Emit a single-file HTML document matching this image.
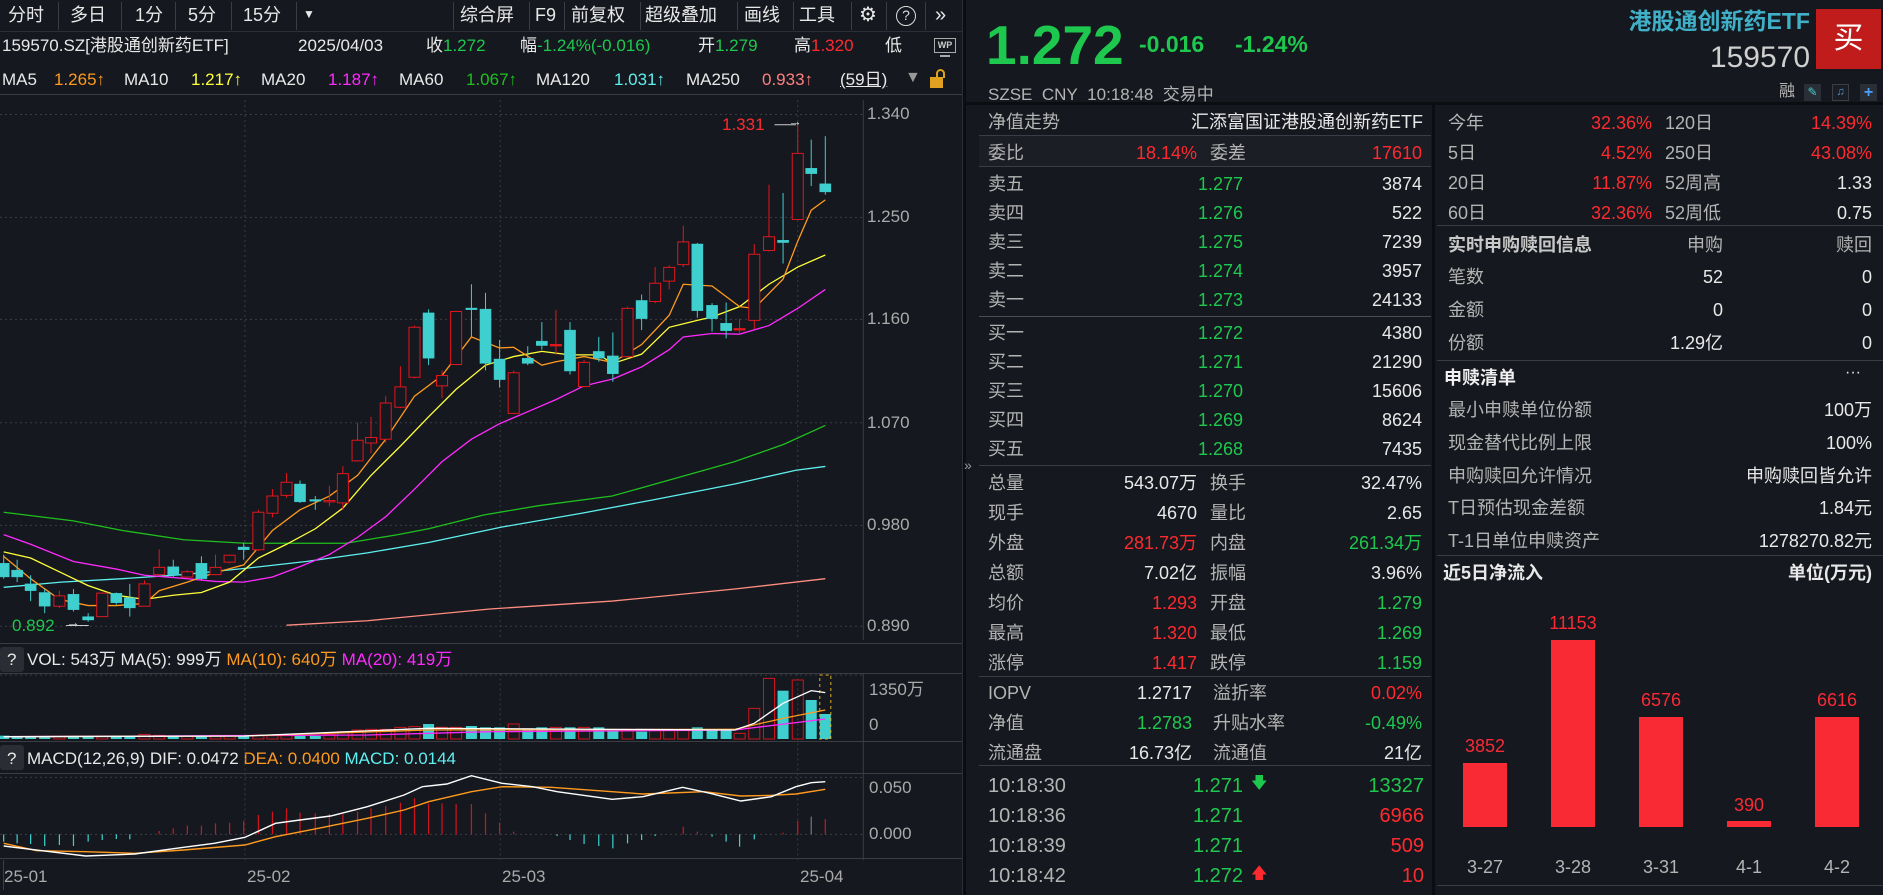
<!DOCTYPE html>
<html><head><meta charset="utf-8">
<style>
*{margin:0;padding:0;box-sizing:border-box}
body{width:1883px;height:895px;background:#15181e;position:relative;overflow:hidden;font-family:"Liberation Sans","Noto Sans CJK SC",sans-serif;color:#d8d8d8}
.t{position:absolute;white-space:nowrap;line-height:1}
.r{text-align:right}
.g{color:#1ec84f}.rd{color:#ff2a2f}.w{color:#e8e8e8}.l{color:#b4b4b4}
.hl{position:absolute;height:1px;background:#3a3d44}
.vl{position:absolute;width:1px;background:#3a3d44}
svg{position:absolute}
</style></head><body>

<!-- toolbar -->
<div class="hl" style="left:0;top:31px;width:962px;background:#2c2f36"></div>
<div class="vl" style="left:58px;top:2px;height:28px"></div>
<div class="vl" style="left:121px;top:2px;height:28px"></div>
<div class="vl" style="left:175px;top:2px;height:28px"></div>
<div class="vl" style="left:231px;top:2px;height:28px"></div>
<div class="vl" style="left:296px;top:2px;height:28px"></div>
<div class="vl" style="left:453px;top:2px;height:28px"></div>
<div class="vl" style="left:529px;top:2px;height:28px"></div>
<div class="vl" style="left:564px;top:2px;height:28px"></div>
<div class="vl" style="left:640px;top:2px;height:28px"></div>
<div class="vl" style="left:737px;top:2px;height:28px"></div>
<div class="vl" style="left:793px;top:2px;height:28px"></div>
<div class="vl" style="left:851px;top:2px;height:28px"></div>
<div class="vl" style="left:886px;top:2px;height:28px"></div>
<div class="vl" style="left:925px;top:2px;height:28px"></div>
<div class="t w" style="left:8px;top:6px;font-size:18px">分时</div>
<div class="t w" style="left:70px;top:6px;font-size:18px">多日</div>
<div class="t w" style="left:135px;top:6px;font-size:18px">1分</div>
<div class="t w" style="left:188px;top:6px;font-size:18px">5分</div>
<div class="t w" style="left:243px;top:6px;font-size:18px">15分</div>
<div class="t w" style="left:303px;top:8px;font-size:12px">▼</div>
<div class="t w" style="left:460px;top:6px;font-size:18px">综合屏</div>
<div class="t w" style="left:535px;top:6px;font-size:18px">F9</div>
<div class="t w" style="left:571px;top:6px;font-size:18px">前复权</div>
<div class="t w" style="left:645px;top:6px;font-size:18px">超级叠加</div>
<div class="t w" style="left:744px;top:6px;font-size:18px">画线</div>
<div class="t w" style="left:799px;top:6px;font-size:18px">工具</div>
<div class="t w" style="left:859px;top:5px;font-size:20px">⚙</div>
<div style="position:absolute;left:896px;top:6px;width:20px;height:20px;border:1.5px solid #ddd;border-radius:50%;color:#ddd;font-size:14px;text-align:center;line-height:17px">?</div>
<div class="t w" style="left:935px;top:5px;font-size:20px">»</div>

<!-- row2 -->
<div class="t w" style="left:2px;top:37px;font-size:17px">159570.SZ[港股通创新药ETF]</div>
<div class="t w" style="left:298px;top:37px;font-size:17px">2025/04/03</div>
<div class="t w" style="left:426px;top:37px;font-size:17px">收<span class="g">1.272</span></div>
<div class="t w" style="left:520px;top:37px;font-size:17px">幅<span class="g">-1.24%(-0.016)</span></div>
<div class="t w" style="left:698px;top:37px;font-size:17px">开<span class="g">1.279</span></div>
<div class="t w" style="left:794px;top:37px;font-size:17px">高<span class="rd">1.320</span></div>
<div class="t w" style="left:885px;top:37px;font-size:17px">低</div>
<div style="position:absolute;left:934px;top:38px;width:22px;height:15px;border:1.5px solid #aaa;color:#ccc;font-size:9px;font-weight:bold;text-align:center;line-height:12px">WP</div>
<div style="position:absolute;left:940px;top:55px;width:10px;height:2px;background:#aaa"></div>
<!-- row3 -->
<div class="t w" style="left:2px;top:71px;font-size:17px">MA5</div>
<div class="t" style="left:54px;top:71px;font-size:17px;color:#ff9a1e">1.265↑</div>
<div class="t w" style="left:124px;top:71px;font-size:17px">MA10</div>
<div class="t" style="left:191px;top:71px;font-size:17px;color:#ffff3a">1.217↑</div>
<div class="t w" style="left:261px;top:71px;font-size:17px">MA20</div>
<div class="t" style="left:328px;top:71px;font-size:17px;color:#ff2aff">1.187↑</div>
<div class="t w" style="left:399px;top:71px;font-size:17px">MA60</div>
<div class="t" style="left:466px;top:71px;font-size:17px;color:#1fbf1f">1.067↑</div>
<div class="t w" style="left:536px;top:71px;font-size:17px">MA120</div>
<div class="t" style="left:614px;top:71px;font-size:17px;color:#5ef0f0">1.031↑</div>
<div class="t w" style="left:686px;top:71px;font-size:17px">MA250</div>
<div class="t" style="left:762px;top:71px;font-size:17px;color:#ff8080">0.933↑</div>
<div class="t w" style="left:840px;top:71px;font-size:17px;text-decoration:underline">(59日)</div>
<div class="t" style="left:905px;top:70px;font-size:16px;color:#999">▼</div>
<div style="position:absolute;left:930px;top:77px;width:13px;height:11px;background:#e0a020"></div>
<div style="position:absolute;left:936px;top:69px;width:9px;height:9px;border:2px solid #e0a020;border-bottom:none;border-radius:5px 5px 0 0"></div>
<div class="hl" style="left:0;top:94px;width:962px"></div>

<!-- main chart -->
<svg style="left:0;top:100px" width="960" height="540" viewBox="0 0 1568 1568" preserveAspectRatio="none">
<g stroke="#3a3d44" stroke-dasharray="2 3" vector-effect="non-scaling-stroke">
<line x1="0" y1="42" x2="1410" y2="42" vector-effect="non-scaling-stroke"/>
<line x1="0" y1="341" x2="1410" y2="341" vector-effect="non-scaling-stroke"/>
<line x1="0" y1="637" x2="1410" y2="637" vector-effect="non-scaling-stroke"/>
<line x1="0" y1="937" x2="1410" y2="937" vector-effect="non-scaling-stroke"/>
<line x1="0" y1="1235" x2="1410" y2="1235" vector-effect="non-scaling-stroke"/>
<line x1="0" y1="1528" x2="1410" y2="1528" vector-effect="non-scaling-stroke"/>
<line x1="400" y1="0" x2="400" y2="1568" vector-effect="non-scaling-stroke"/>
<line x1="817" y1="0" x2="817" y2="1568" vector-effect="non-scaling-stroke"/>
<line x1="1303" y1="0" x2="1303" y2="1568" vector-effect="non-scaling-stroke"/>
</g>
<line x1="1410" y1="0" x2="1410" y2="1568" stroke="#3a3d44" vector-effect="non-scaling-stroke"/>
<g fill="none" stroke-width="1.3">
<polyline vector-effect="non-scaling-stroke" stroke="#ff8d80" points="468,1525 600,1512 800,1478 1000,1455 1200,1420 1348,1390"/>
<polyline vector-effect="non-scaling-stroke" stroke="#5ef0f0" points="6,1415 100,1400 200,1390 300,1378 400,1360 500,1340 600,1315 700,1285 820,1240 950,1200 1070,1160 1200,1115 1300,1075 1348,1064"/>
<polyline vector-effect="non-scaling-stroke" stroke="#1fbf1f" points="6,1197 120,1222 200,1250 300,1277 400,1287 565,1287 650,1262 700,1245 790,1205 880,1178 1000,1150 1100,1100 1200,1050 1280,1000 1348,945"/>
<polyline vector-effect="non-scaling-stroke" stroke="#ff2aff" points="6,1262 50,1290 120,1340 190,1362 236,1380 306,1390 352,1398 398,1400 445,1385 490,1355 538,1320 584,1270 630,1210 677,1130 722,1050 770,985 816,940 862,905 908,870 954,830 1001,810 1048,775 1093,725 1116,688 1163,678 1208,680 1256,655 1303,605 1348,550"/>
<polyline vector-effect="non-scaling-stroke" stroke="#ffff3a" points="6,1312 50,1330 97,1370 144,1410 190,1438 236,1450 283,1438 329,1430 375,1400 422,1330 468,1290 515,1245 560,1185 606,1090 654,1005 700,920 745,840 793,770 839,745 885,730 931,740 978,740 1001,765 1048,738 1093,660 1139,640 1163,630 1208,600 1256,535 1303,485 1348,450"/>
<polyline vector-effect="non-scaling-stroke" stroke="#ff9a1e" points="6,1325 50,1390 97,1450 144,1468 190,1468 236,1462 260,1425 306,1400 352,1372 398,1350 445,1250 490,1190 538,1150 584,1090 630,985 677,860 722,800 770,688 816,720 839,718 885,770 908,760 954,745 1001,762 1048,710 1093,625 1116,535 1163,540 1208,600 1232,605 1279,520 1303,410 1325,320 1348,290"/>
</g>
<g id="cd">
<!-- candles -->
<g stroke="#3fcfcf" fill="#3fcfcf">
<line x1="6" y1="1320" x2="6" y2="1390" vector-effect="non-scaling-stroke"/><rect x="-3" y="1345" width="18" height="40"/>
<line x1="28" y1="1335" x2="28" y2="1400" vector-effect="non-scaling-stroke"/><rect x="19" y="1365" width="18" height="20"/>
<line x1="50" y1="1380" x2="50" y2="1455" vector-effect="non-scaling-stroke"/><rect x="41" y="1405" width="18" height="20"/>
<line x1="73" y1="1420" x2="73" y2="1490" vector-effect="non-scaling-stroke"/><rect x="64" y="1430" width="18" height="40"/>
<line x1="120" y1="1420" x2="120" y2="1485" vector-effect="non-scaling-stroke"/><rect x="111" y="1435" width="18" height="45"/>
<line x1="144" y1="1490" x2="144" y2="1515" vector-effect="non-scaling-stroke"/><rect x="135" y="1500" width="18" height="10"/>
<line x1="190" y1="1430" x2="190" y2="1465" vector-effect="non-scaling-stroke"/><rect x="181" y="1432" width="18" height="28"/>
<line x1="212" y1="1405" x2="212" y2="1500" vector-effect="non-scaling-stroke"/><rect x="203" y="1445" width="18" height="30"/>
<line x1="283" y1="1335" x2="283" y2="1385" vector-effect="non-scaling-stroke"/><rect x="274" y="1355" width="18" height="25"/>
<line x1="329" y1="1325" x2="329" y2="1395" vector-effect="non-scaling-stroke"/><rect x="320" y="1345" width="18" height="45"/>
<line x1="398" y1="1285" x2="398" y2="1335" vector-effect="non-scaling-stroke"/><rect x="389" y="1298" width="18" height="8"/>
<line x1="490" y1="1105" x2="490" y2="1170" vector-effect="non-scaling-stroke"/><rect x="481" y="1115" width="18" height="52"/>
<line x1="515" y1="1150" x2="515" y2="1190" vector-effect="non-scaling-stroke"/><rect x="506" y="1160" width="18" height="5"/>
<line x1="700" y1="608" x2="700" y2="770" vector-effect="non-scaling-stroke"/><rect x="691" y="618" width="18" height="132"/>
<line x1="770" y1="535" x2="770" y2="690" vector-effect="non-scaling-stroke"/><rect x="761" y="604" width="18" height="5"/>
<line x1="793" y1="560" x2="793" y2="785" vector-effect="non-scaling-stroke"/><rect x="784" y="607" width="18" height="158"/>
<line x1="816" y1="697" x2="816" y2="835" vector-effect="non-scaling-stroke"/><rect x="807" y="752" width="18" height="60"/>
<line x1="862" y1="715" x2="862" y2="770" vector-effect="non-scaling-stroke"/><rect x="853" y="750" width="18" height="15"/>
<line x1="885" y1="645" x2="885" y2="725" vector-effect="non-scaling-stroke"/><rect x="876" y="700" width="18" height="13"/>
<line x1="931" y1="645" x2="931" y2="797" vector-effect="non-scaling-stroke"/><rect x="922" y="668" width="18" height="119"/>
<line x1="978" y1="688" x2="978" y2="760" vector-effect="non-scaling-stroke"/><rect x="969" y="730" width="18" height="20"/>
<line x1="1001" y1="675" x2="1001" y2="818" vector-effect="non-scaling-stroke"/><rect x="992" y="743" width="18" height="52"/>
<line x1="1048" y1="565" x2="1048" y2="668" vector-effect="non-scaling-stroke"/><rect x="1039" y="582" width="18" height="53"/>
<line x1="1139" y1="415" x2="1139" y2="632" vector-effect="non-scaling-stroke"/><rect x="1130" y="418" width="18" height="194"/>
<line x1="1163" y1="590" x2="1163" y2="672" vector-effect="non-scaling-stroke"/><rect x="1154" y="596" width="18" height="39"/>
<line x1="1186" y1="588" x2="1186" y2="692" vector-effect="non-scaling-stroke"/><rect x="1177" y="648" width="18" height="22"/>
<line x1="1279" y1="270" x2="1279" y2="475" vector-effect="non-scaling-stroke"/><rect x="1270" y="407" width="18" height="7"/>
<line x1="1325" y1="115" x2="1325" y2="250" vector-effect="non-scaling-stroke"/><rect x="1316" y="198" width="18" height="16"/>
<line x1="1348" y1="105" x2="1348" y2="275" vector-effect="non-scaling-stroke"/><rect x="1339" y="243" width="18" height="24"/>
</g>
<g stroke="#e0161f" fill="#15181e">
<line x1="97" y1="1425" x2="97" y2="1475" vector-effect="non-scaling-stroke"/><rect x="88" y="1440" width="18" height="30" vector-effect="non-scaling-stroke"/>
<line x1="167" y1="1430" x2="167" y2="1500" vector-effect="non-scaling-stroke"/><rect x="158" y="1432" width="18" height="68" vector-effect="non-scaling-stroke"/>
<line x1="236" y1="1395" x2="236" y2="1470" vector-effect="non-scaling-stroke"/><rect x="227" y="1405" width="18" height="65" vector-effect="non-scaling-stroke"/>
<line x1="260" y1="1305" x2="260" y2="1380" vector-effect="non-scaling-stroke"/><rect x="251" y="1357" width="18" height="21" vector-effect="non-scaling-stroke"/>
<line x1="306" y1="1365" x2="306" y2="1390" vector-effect="non-scaling-stroke"/><rect x="297" y="1370" width="18" height="15" vector-effect="non-scaling-stroke"/>
<line x1="352" y1="1320" x2="352" y2="1380" vector-effect="non-scaling-stroke"/><rect x="343" y="1357" width="18" height="21" vector-effect="non-scaling-stroke"/>
<line x1="375" y1="1320" x2="375" y2="1345" vector-effect="non-scaling-stroke"/><rect x="366" y="1322" width="18" height="20" vector-effect="non-scaling-stroke"/>
<line x1="422" y1="1190" x2="422" y2="1310" vector-effect="non-scaling-stroke"/><rect x="413" y="1197" width="18" height="109" vector-effect="non-scaling-stroke"/>
<line x1="445" y1="1130" x2="445" y2="1212" vector-effect="non-scaling-stroke"/><rect x="436" y="1150" width="18" height="50" vector-effect="non-scaling-stroke"/>
<line x1="468" y1="1083" x2="468" y2="1155" vector-effect="non-scaling-stroke"/><rect x="459" y="1110" width="18" height="38" vector-effect="non-scaling-stroke"/>
<line x1="538" y1="1120" x2="538" y2="1180" vector-effect="non-scaling-stroke"/><rect x="529" y="1163" width="18" height="4" vector-effect="non-scaling-stroke"/>
<line x1="560" y1="1063" x2="560" y2="1190" vector-effect="non-scaling-stroke"/><rect x="551" y="1085" width="18" height="85" vector-effect="non-scaling-stroke"/>
<line x1="584" y1="937" x2="584" y2="1050" vector-effect="non-scaling-stroke"/><rect x="575" y="988" width="18" height="60" vector-effect="non-scaling-stroke"/>
<line x1="606" y1="920" x2="606" y2="1026" vector-effect="non-scaling-stroke"/><rect x="597" y="980" width="18" height="16" vector-effect="non-scaling-stroke"/>
<line x1="630" y1="860" x2="630" y2="995" vector-effect="non-scaling-stroke"/><rect x="621" y="880" width="18" height="105" vector-effect="non-scaling-stroke"/>
<line x1="654" y1="773" x2="654" y2="895" vector-effect="non-scaling-stroke"/><rect x="645" y="833" width="18" height="59" vector-effect="non-scaling-stroke"/>
<line x1="677" y1="655" x2="677" y2="808" vector-effect="non-scaling-stroke"/><rect x="668" y="660" width="18" height="145" vector-effect="non-scaling-stroke"/>
<line x1="722" y1="785" x2="722" y2="866" vector-effect="non-scaling-stroke"/><rect x="713" y="800" width="18" height="30" vector-effect="non-scaling-stroke"/>
<line x1="745" y1="612" x2="745" y2="770" vector-effect="non-scaling-stroke"/><rect x="736" y="614" width="18" height="154" vector-effect="non-scaling-stroke"/>
<line x1="839" y1="785" x2="839" y2="912" vector-effect="non-scaling-stroke"/><rect x="830" y="792" width="18" height="118" vector-effect="non-scaling-stroke"/>
<line x1="908" y1="610" x2="908" y2="740" vector-effect="non-scaling-stroke"/><rect x="899" y="710" width="18" height="4" fill="#e0161f" vector-effect="non-scaling-stroke"/>
<line x1="954" y1="755" x2="954" y2="835" vector-effect="non-scaling-stroke"/><rect x="945" y="762" width="18" height="70" vector-effect="non-scaling-stroke"/>
<line x1="1025" y1="600" x2="1025" y2="750" vector-effect="non-scaling-stroke"/><rect x="1016" y="605" width="18" height="140" vector-effect="non-scaling-stroke"/>
<line x1="1070" y1="485" x2="1070" y2="590" vector-effect="non-scaling-stroke"/><rect x="1061" y="532" width="18" height="53" vector-effect="non-scaling-stroke"/>
<line x1="1093" y1="480" x2="1093" y2="550" vector-effect="non-scaling-stroke"/><rect x="1084" y="486" width="18" height="40" vector-effect="non-scaling-stroke"/>
<line x1="1116" y1="365" x2="1116" y2="485" vector-effect="non-scaling-stroke"/><rect x="1107" y="412" width="18" height="66" vector-effect="non-scaling-stroke"/>
<line x1="1208" y1="635" x2="1208" y2="680" vector-effect="non-scaling-stroke"/><rect x="1199" y="664" width="18" height="4" fill="#e0161f" vector-effect="non-scaling-stroke"/>
<line x1="1232" y1="418" x2="1232" y2="665" vector-effect="non-scaling-stroke"/><rect x="1223" y="448" width="18" height="192" vector-effect="non-scaling-stroke"/>
<line x1="1256" y1="246" x2="1256" y2="440" vector-effect="non-scaling-stroke"/><rect x="1247" y="397" width="18" height="40" vector-effect="non-scaling-stroke"/>
<line x1="1303" y1="75" x2="1303" y2="348" vector-effect="non-scaling-stroke"/><rect x="1294" y="155" width="18" height="192" vector-effect="non-scaling-stroke"/>
</g>
</g>
<g stroke="#ccc" fill="none"><line x1="1265" y1="72" x2="1300" y2="72" vector-effect="non-scaling-stroke"/><line x1="108" y1="1526" x2="145" y2="1526" vector-effect="non-scaling-stroke"/></g>
</svg>
<div class="t" style="left:867px;top:105px;font-size:17px;color:#aaa">1.340</div>
<div class="t" style="left:867px;top:208px;font-size:17px;color:#aaa">1.250</div>
<div class="t" style="left:867px;top:310px;font-size:17px;color:#aaa">1.160</div>
<div class="t" style="left:867px;top:414px;font-size:17px;color:#aaa">1.070</div>
<div class="t" style="left:867px;top:516px;font-size:17px;color:#aaa">0.980</div>
<div class="t" style="left:867px;top:617px;font-size:17px;color:#aaa">0.890</div>
<div class="t rd" style="left:722px;top:116px;font-size:17px">1.331</div>
<div class="t" style="left:788px;top:114px;font-size:14px;color:#ccc">→</div>
<div class="t g" style="left:12px;top:617px;font-size:17px">0.892</div>
<div class="t" style="left:66px;top:615px;font-size:14px;color:#ccc">→</div>

<!-- lower panels -->
<div class="hl" style="left:0;top:643px;width:962px"></div>
<div style="position:absolute;left:0;top:647px;width:24px;height:25px;background:#2a2d33;border-radius:3px"></div>
<div class="t w" style="left:7px;top:651px;font-size:17px">?</div>
<div class="t w" style="left:27px;top:651px;font-size:17px">VOL: 543万 MA(5): 999万 <span style="color:#ff9a1e">MA(10): 640万</span> <span style="color:#ff2aff">MA(20): 419万</span></div>
<div class="hl" style="left:0;top:673px;width:962px"></div>
<div class="hl" style="left:0;top:741px;width:962px"></div>
<div style="position:absolute;left:0;top:745px;width:24px;height:25px;background:#2a2d33;border-radius:3px"></div>
<div class="t w" style="left:7px;top:750px;font-size:17px">?</div>
<div class="t w" style="left:27px;top:750px;font-size:17px">MACD(12,26,9) DIF: 0.0472 <span style="color:#ff9a1e">DEA: 0.0400</span> <span style="color:#5ef0f0">MACD: 0.0144</span></div>
<div class="hl" style="left:0;top:773px;width:962px"></div>
<div class="hl" style="left:0;top:858px;width:962px"></div>
<svg style="left:0;top:640px" width="960" height="255" viewBox="0 0 1568 765" preserveAspectRatio="none">
<line x1="1410" y1="100" x2="1410" y2="660" stroke="#3a3d44" vector-effect="non-scaling-stroke"/>
<g stroke="#3a3d44" stroke-dasharray="2 3"><line x1="0" y1="105" x2="1410" y2="105" vector-effect="non-scaling-stroke"/><line x1="0" y1="412" x2="1410" y2="412" vector-effect="non-scaling-stroke"/><line x1="0" y1="583" x2="1410" y2="583" vector-effect="non-scaling-stroke"/>
<line x1="400" y1="100" x2="400" y2="660" vector-effect="non-scaling-stroke"/><line x1="817" y1="100" x2="817" y2="660" vector-effect="non-scaling-stroke"/><line x1="1303" y1="100" x2="1303" y2="660" vector-effect="non-scaling-stroke"/></g>
<g fill="#3fcfcf">
<rect x="-3" y="287" width="18" height="10"/><rect x="19" y="290" width="18" height="7"/><rect x="41" y="290" width="18" height="7"/><rect x="64" y="290" width="18" height="7"/><rect x="111" y="290" width="18" height="7"/><rect x="135" y="290" width="18" height="7"/><rect x="181" y="290" width="18" height="7"/><rect x="203" y="288" width="18" height="9"/><rect x="274" y="288" width="18" height="9"/><rect x="320" y="288" width="18" height="9"/><rect x="389" y="288" width="18" height="9"/><rect x="481" y="287" width="18" height="10"/><rect x="506" y="288" width="18" height="9"/><rect x="691" y="252" width="18" height="45"/><rect x="761" y="258" width="18" height="39"/><rect x="784" y="262" width="18" height="35"/><rect x="807" y="262" width="18" height="35"/><rect x="853" y="265" width="18" height="32"/><rect x="876" y="262" width="18" height="35"/><rect x="922" y="262" width="18" height="35"/><rect x="969" y="262" width="18" height="35"/><rect x="992" y="268" width="18" height="29"/><rect x="1039" y="275" width="18" height="22"/><rect x="1130" y="262" width="18" height="35"/><rect x="1154" y="268" width="18" height="29"/><rect x="1177" y="270" width="18" height="27"/><rect x="1270" y="152" width="18" height="145"/><rect x="1316" y="180" width="18" height="117"/><rect x="1339" y="222" width="18" height="75"/>
</g>
<g fill="none" stroke="#d0141c">
<rect x="88" y="290" width="18" height="7" vector-effect="non-scaling-stroke"/><rect x="158" y="290" width="18" height="7" vector-effect="non-scaling-stroke"/><rect x="227" y="283" width="18" height="14" vector-effect="non-scaling-stroke"/><rect x="251" y="286" width="18" height="11" vector-effect="non-scaling-stroke"/><rect x="297" y="288" width="18" height="9" vector-effect="non-scaling-stroke"/><rect x="343" y="286" width="18" height="11" vector-effect="non-scaling-stroke"/><rect x="366" y="286" width="18" height="11" vector-effect="non-scaling-stroke"/><rect x="413" y="285" width="18" height="12" vector-effect="non-scaling-stroke"/><rect x="436" y="287" width="18" height="10" vector-effect="non-scaling-stroke"/><rect x="459" y="287" width="18" height="10" vector-effect="non-scaling-stroke"/><rect x="529" y="283" width="18" height="14" vector-effect="non-scaling-stroke"/><rect x="551" y="275" width="18" height="22" vector-effect="non-scaling-stroke"/><rect x="575" y="270" width="18" height="27" vector-effect="non-scaling-stroke"/><rect x="597" y="268" width="18" height="29" vector-effect="non-scaling-stroke"/><rect x="621" y="268" width="18" height="29" vector-effect="non-scaling-stroke"/><rect x="645" y="262" width="18" height="35" vector-effect="non-scaling-stroke"/><rect x="668" y="260" width="18" height="37" vector-effect="non-scaling-stroke"/><rect x="713" y="262" width="18" height="35" vector-effect="non-scaling-stroke"/><rect x="736" y="262" width="18" height="35" vector-effect="non-scaling-stroke"/><rect x="830" y="252" width="18" height="45" vector-effect="non-scaling-stroke"/><rect x="899" y="262" width="18" height="35" vector-effect="non-scaling-stroke"/><rect x="945" y="262" width="18" height="35" vector-effect="non-scaling-stroke"/><rect x="1016" y="268" width="18" height="29" vector-effect="non-scaling-stroke"/><rect x="1061" y="268" width="18" height="29" vector-effect="non-scaling-stroke"/><rect x="1084" y="268" width="18" height="29" vector-effect="non-scaling-stroke"/><rect x="1107" y="268" width="18" height="29" vector-effect="non-scaling-stroke"/><rect x="1199" y="280" width="18" height="17" vector-effect="non-scaling-stroke"/><rect x="1223" y="205" width="18" height="92" vector-effect="non-scaling-stroke"/><rect x="1247" y="115" width="18" height="182" vector-effect="non-scaling-stroke"/><rect x="1294" y="120" width="18" height="177" vector-effect="non-scaling-stroke"/>
</g>
<rect x="1339" y="105" width="18" height="192" fill="none" stroke="#e0b020" stroke-dasharray="3 3" vector-effect="non-scaling-stroke"/>
<g fill="none" stroke-width="1.3">
<polyline vector-effect="non-scaling-stroke" stroke="#ff2aff" points="6,290 600,285 800,275 1200,270 1290,250 1348,237"/>
<polyline vector-effect="non-scaling-stroke" stroke="#ff9a1e" points="6,290 400,288 700,270 1200,268 1279,235 1348,210"/>
<polyline vector-effect="non-scaling-stroke" stroke="#ffffff" points="6,290 400,288 700,265 1200,270 1232,250 1279,190 1325,152 1348,158"/>
</g>
<g stroke="#d0141c" stroke-width="2">
<line x1="260" y1="583" x2="260" y2="573"/><line x1="283" y1="583" x2="283" y2="565"/><line x1="306" y1="583" x2="306" y2="557"/><line x1="329" y1="583" x2="329" y2="557"/><line x1="352" y1="583" x2="352" y2="550"/><line x1="375" y1="583" x2="375" y2="548"/><line x1="398" y1="583" x2="398" y2="543"/><line x1="422" y1="583" x2="422" y2="525"/><line x1="445" y1="583" x2="445" y2="515"/><line x1="468" y1="583" x2="468" y2="505"/><line x1="490" y1="583" x2="490" y2="518"/><line x1="515" y1="583" x2="515" y2="520"/><line x1="538" y1="583" x2="538" y2="522"/><line x1="560" y1="583" x2="560" y2="523"/><line x1="584" y1="583" x2="584" y2="515"/><line x1="606" y1="583" x2="606" y2="505"/><line x1="630" y1="583" x2="630" y2="498"/><line x1="654" y1="583" x2="654" y2="488"/><line x1="677" y1="583" x2="677" y2="475"/><line x1="700" y1="583" x2="700" y2="490"/><line x1="722" y1="583" x2="722" y2="490"/><line x1="745" y1="583" x2="745" y2="492"/><line x1="770" y1="583" x2="770" y2="492"/><line x1="793" y1="583" x2="793" y2="520"/><line x1="816" y1="583" x2="816" y2="548"/><line x1="839" y1="583" x2="839" y2="575"/><line x1="1116" y1="583" x2="1116" y2="560"/><line x1="1139" y1="583" x2="1139" y2="575"/><line x1="1279" y1="583" x2="1279" y2="578"/><line x1="1303" y1="583" x2="1303" y2="543"/><line x1="1348" y1="583" x2="1348" y2="537"/>
</g>
<g stroke="#3fcfcf" stroke-width="2">
<line x1="6" y1="583" x2="6" y2="605"/><line x1="28" y1="583" x2="28" y2="610"/><line x1="50" y1="583" x2="50" y2="612"/><line x1="73" y1="583" x2="73" y2="618"/><line x1="97" y1="583" x2="97" y2="615"/><line x1="120" y1="583" x2="120" y2="618"/><line x1="144" y1="583" x2="144" y2="605"/><line x1="167" y1="583" x2="167" y2="600"/><line x1="190" y1="583" x2="190" y2="597"/><line x1="212" y1="583" x2="212" y2="598"/><line x1="910" y1="583" x2="910" y2="588"/><line x1="931" y1="583" x2="931" y2="600"/><line x1="954" y1="583" x2="954" y2="612"/><line x1="978" y1="583" x2="978" y2="618"/><line x1="1001" y1="583" x2="1001" y2="625"/><line x1="1025" y1="583" x2="1025" y2="610"/><line x1="1048" y1="583" x2="1048" y2="600"/><line x1="1070" y1="583" x2="1070" y2="588"/><line x1="1163" y1="583" x2="1163" y2="590"/><line x1="1186" y1="583" x2="1186" y2="605"/><line x1="1208" y1="583" x2="1208" y2="620"/><line x1="1232" y1="583" x2="1232" y2="598"/>
</g>
<line x1="1325" y1="583" x2="1325" y2="530" stroke="#777" stroke-width="2"/>
<g fill="none" stroke-width="1.4">
<polyline vector-effect="non-scaling-stroke" stroke="#ff9a1e" points="6,610 60,632 140,635 220,640 300,630 400,615 450,590 520,565 600,535 660,510 700,485 770,455 820,440 900,442 1000,455 1050,462 1150,455 1210,468 1260,466 1300,462 1348,448"/>
<polyline vector-effect="non-scaling-stroke" stroke="#ffffff" points="6,618 50,628 140,648 220,642 300,622 350,610 400,592 450,550 490,540 540,528 600,500 660,465 690,440 730,432 770,407 820,430 870,440 910,455 1000,478 1050,470 1115,442 1160,460 1210,483 1260,470 1300,440 1325,428 1348,425"/>
</g>
</svg>
<div class="t" style="left:869px;top:681px;font-size:17px;color:#aaa">1350万</div>
<div class="t" style="left:869px;top:716px;font-size:17px;color:#aaa">0</div>
<div class="t" style="left:869px;top:779px;font-size:17px;color:#aaa">0.050</div>
<div class="t" style="left:869px;top:825px;font-size:17px;color:#aaa">0.000</div>
<div class="vl" style="left:3px;top:860px;height:30px"></div>
<div class="t" style="left:4px;top:868px;font-size:17px;color:#aaa">25-01</div>
<div class="t" style="left:247px;top:868px;font-size:17px;color:#aaa">25-02</div>
<div class="t" style="left:502px;top:868px;font-size:17px;color:#aaa">25-03</div>
<div class="t" style="left:800px;top:868px;font-size:17px;color:#aaa">25-04</div>

<!-- divider -->
<div style="position:absolute;left:962px;top:0;width:4px;height:895px;background:#0b0d10"></div>
<div class="vl" style="left:962px;top:0;height:895px;background:#2c2f36"></div>
<div class="t" style="left:964px;top:458px;font-size:14px;color:#999">»</div>

<!-- quote header -->
<div class="t g" style="left:986px;top:18px;font-size:55px;font-weight:bold">1.272</div>
<div class="t g" style="left:1139px;top:33px;font-size:23px;font-weight:bold">-0.016</div>
<div class="t g" style="left:1235px;top:33px;font-size:23px;font-weight:bold">-1.24%</div>
<div class="t r" style="right:73px;top:10px;font-size:23px;font-weight:bold;color:#3fb0c8">港股通创新药ETF</div>
<div class="t r" style="right:73px;top:43px;font-size:30px;color:#cfcfcf">159570</div>
<div style="position:absolute;left:1816px;top:9px;width:65px;height:60px;background:#c01c1c;color:#fff;font-size:30px;text-align:center;line-height:60px">买</div>
<div class="t l" style="left:988px;top:86px;font-size:17px">SZSE&nbsp; CNY&nbsp; 10:18:48&nbsp; 交易中</div>
<div class="t l" style="left:1779px;top:84px;font-size:16px">融</div>
<div style="position:absolute;left:1804px;top:84px;width:17px;height:17px;background:#2a2e36;color:#3fcfcf;font-size:12px;text-align:center;line-height:17px">✎</div>
<div style="position:absolute;left:1832px;top:84px;width:17px;height:17px;border:1px solid #3a3e46;background:#1a1d24;color:#4a9ad8;font-size:11px;text-align:center;line-height:15px">♫</div>
<div style="position:absolute;left:1860px;top:84px;width:17px;height:17px;background:#2a2e36;color:#4aa0ff;font-size:16px;font-weight:bold;text-align:center;line-height:17px">+</div>
<div class="hl" style="left:966px;top:102px;width:917px;background:#0b0d10;height:3px"></div>

<!-- order book panel -->
<div class="vl" style="left:1432px;top:104px;height:791px;background:#0b0d10;width:3px"></div>
<div class="t l" style="left:988px;top:113px;font-size:18px">净值走势</div>
<div class="t r w" style="right:460px;top:113px;font-size:18px">汇添富国证港股通创新药ETF</div>
<div class="hl" style="left:979px;top:135px;width:452px"></div>
<div style="position:absolute;left:979px;top:136px;width:452px;height:30px;background:#1b1e25"></div>
<div class="t l" style="left:988px;top:144px;font-size:18px">委比</div>
<div class="t r rd" style="right:686px;top:144px;font-size:18px">18.14%</div>
<div class="t l" style="left:1210px;top:144px;font-size:18px">委差</div>
<div class="t r rd" style="right:461px;top:144px;font-size:18px">17610</div>
<div class="hl" style="left:979px;top:166px;width:452px"></div>

<div class="t l" style="left:988px;top:175px;font-size:18px">卖五</div><div class="t r g" style="right:640px;top:175px;font-size:18px">1.277</div><div class="t r w" style="right:461px;top:175px;font-size:18px">3874</div>
<div class="t l" style="left:988px;top:204px;font-size:18px">卖四</div><div class="t r g" style="right:640px;top:204px;font-size:18px">1.276</div><div class="t r w" style="right:461px;top:204px;font-size:18px">522</div>
<div class="t l" style="left:988px;top:233px;font-size:18px">卖三</div><div class="t r g" style="right:640px;top:233px;font-size:18px">1.275</div><div class="t r w" style="right:461px;top:233px;font-size:18px">7239</div>
<div class="t l" style="left:988px;top:262px;font-size:18px">卖二</div><div class="t r g" style="right:640px;top:262px;font-size:18px">1.274</div><div class="t r w" style="right:461px;top:262px;font-size:18px">3957</div>
<div class="t l" style="left:988px;top:291px;font-size:18px">卖一</div><div class="t r g" style="right:640px;top:291px;font-size:18px">1.273</div><div class="t r w" style="right:461px;top:291px;font-size:18px">24133</div>
<div class="hl" style="left:979px;top:316px;width:452px;background:#4a4d54"></div>
<div class="t l" style="left:988px;top:324px;font-size:18px">买一</div><div class="t r g" style="right:640px;top:324px;font-size:18px">1.272</div><div class="t r w" style="right:461px;top:324px;font-size:18px">4380</div>
<div class="t l" style="left:988px;top:353px;font-size:18px">买二</div><div class="t r g" style="right:640px;top:353px;font-size:18px">1.271</div><div class="t r w" style="right:461px;top:353px;font-size:18px">21290</div>
<div class="t l" style="left:988px;top:382px;font-size:18px">买三</div><div class="t r g" style="right:640px;top:382px;font-size:18px">1.270</div><div class="t r w" style="right:461px;top:382px;font-size:18px">15606</div>
<div class="t l" style="left:988px;top:411px;font-size:18px">买四</div><div class="t r g" style="right:640px;top:411px;font-size:18px">1.269</div><div class="t r w" style="right:461px;top:411px;font-size:18px">8624</div>
<div class="t l" style="left:988px;top:440px;font-size:18px">买五</div><div class="t r g" style="right:640px;top:440px;font-size:18px">1.268</div><div class="t r w" style="right:461px;top:440px;font-size:18px">7435</div>
<div class="hl" style="left:979px;top:465px;width:452px"></div>

<div class="t l" style="left:988px;top:474px;font-size:18px">总量</div><div class="t r w" style="right:686px;top:474px;font-size:18px">543.07万</div><div class="t l" style="left:1210px;top:474px;font-size:18px">换手</div><div class="t r w" style="right:461px;top:474px;font-size:18px">32.47%</div>
<div class="t l" style="left:988px;top:504px;font-size:18px">现手</div><div class="t r w" style="right:686px;top:504px;font-size:18px">4670</div><div class="t l" style="left:1210px;top:504px;font-size:18px">量比</div><div class="t r w" style="right:461px;top:504px;font-size:18px">2.65</div>
<div class="t l" style="left:988px;top:534px;font-size:18px">外盘</div><div class="t r rd" style="right:686px;top:534px;font-size:18px">281.73万</div><div class="t l" style="left:1210px;top:534px;font-size:18px">内盘</div><div class="t r g" style="right:461px;top:534px;font-size:18px">261.34万</div>
<div class="t l" style="left:988px;top:564px;font-size:18px">总额</div><div class="t r w" style="right:686px;top:564px;font-size:18px">7.02亿</div><div class="t l" style="left:1210px;top:564px;font-size:18px">振幅</div><div class="t r w" style="right:461px;top:564px;font-size:18px">3.96%</div>
<div class="t l" style="left:988px;top:594px;font-size:18px">均价</div><div class="t r rd" style="right:686px;top:594px;font-size:18px">1.293</div><div class="t l" style="left:1210px;top:594px;font-size:18px">开盘</div><div class="t r g" style="right:461px;top:594px;font-size:18px">1.279</div>
<div class="t l" style="left:988px;top:624px;font-size:18px">最高</div><div class="t r rd" style="right:686px;top:624px;font-size:18px">1.320</div><div class="t l" style="left:1210px;top:624px;font-size:18px">最低</div><div class="t r g" style="right:461px;top:624px;font-size:18px">1.269</div>
<div class="t l" style="left:988px;top:654px;font-size:18px">涨停</div><div class="t r rd" style="right:686px;top:654px;font-size:18px">1.417</div><div class="t l" style="left:1210px;top:654px;font-size:18px">跌停</div><div class="t r g" style="right:461px;top:654px;font-size:18px">1.159</div>
<div class="hl" style="left:979px;top:676px;width:452px"></div>
<div class="t l" style="left:988px;top:684px;font-size:18px">IOPV</div><div class="t r w" style="right:691px;top:684px;font-size:18px">1.2717</div><div class="t l" style="left:1213px;top:684px;font-size:18px">溢折率</div><div class="t r rd" style="right:461px;top:684px;font-size:18px">0.02%</div>
<div class="t l" style="left:988px;top:714px;font-size:18px">净值</div><div class="t r g" style="right:691px;top:714px;font-size:18px">1.2783</div><div class="t l" style="left:1213px;top:714px;font-size:18px">升贴水率</div><div class="t r g" style="right:461px;top:714px;font-size:18px">-0.49%</div>
<div class="t l" style="left:988px;top:744px;font-size:18px">流通盘</div><div class="t r w" style="right:691px;top:744px;font-size:18px">16.73亿</div><div class="t l" style="left:1213px;top:744px;font-size:18px">流通值</div><div class="t r w" style="right:461px;top:744px;font-size:18px">21亿</div>
<div class="hl" style="left:979px;top:765px;width:452px"></div>
<div class="t l" style="left:988px;top:776px;font-size:20px">10:18:30</div><div class="t r g" style="right:640px;top:776px;font-size:20px">1.271</div><div class="t g" style="left:1251px;top:776px;font-size:16px">🡇</div><div class="t r g" style="right:459px;top:776px;font-size:20px">13327</div>
<div class="t l" style="left:988px;top:806px;font-size:20px">10:18:36</div><div class="t r g" style="right:640px;top:806px;font-size:20px">1.271</div><div class="t r rd" style="right:459px;top:806px;font-size:20px">6966</div>
<div class="t l" style="left:988px;top:836px;font-size:20px">10:18:39</div><div class="t r g" style="right:640px;top:836px;font-size:20px">1.271</div><div class="t r rd" style="right:459px;top:836px;font-size:20px">509</div>
<div class="t l" style="left:988px;top:866px;font-size:20px">10:18:42</div><div class="t r g" style="right:640px;top:866px;font-size:20px">1.272</div><div class="t rd" style="left:1251px;top:866px;font-size:16px">🡅</div><div class="t r rd" style="right:459px;top:866px;font-size:20px">10</div>

<!-- right stats panel -->
<div class="t l" style="left:1448px;top:114px;font-size:18px">今年</div><div class="t r rd" style="right:231px;top:114px;font-size:18px">32.36%</div><div class="t l" style="left:1665px;top:114px;font-size:18px">120日</div><div class="t r rd" style="right:11px;top:114px;font-size:18px">14.39%</div>
<div class="t l" style="left:1448px;top:144px;font-size:18px">5日</div><div class="t r rd" style="right:231px;top:144px;font-size:18px">4.52%</div><div class="t l" style="left:1665px;top:144px;font-size:18px">250日</div><div class="t r rd" style="right:11px;top:144px;font-size:18px">43.08%</div>
<div class="t l" style="left:1448px;top:174px;font-size:18px">20日</div><div class="t r rd" style="right:231px;top:174px;font-size:18px">11.87%</div><div class="t l" style="left:1665px;top:174px;font-size:18px">52周高</div><div class="t r w" style="right:11px;top:174px;font-size:18px">1.33</div>
<div class="t l" style="left:1448px;top:204px;font-size:18px">60日</div><div class="t r rd" style="right:231px;top:204px;font-size:18px">32.36%</div><div class="t l" style="left:1665px;top:204px;font-size:18px">52周低</div><div class="t r w" style="right:11px;top:204px;font-size:18px">0.75</div>
<div class="hl" style="left:1437px;top:225px;width:446px"></div>
<div class="t" style="left:1448px;top:236px;font-size:18px;font-weight:bold;color:#c8c8c8">实时申购赎回信息</div><div class="t r l" style="right:160px;top:236px;font-size:18px">申购</div><div class="t r l" style="right:11px;top:236px;font-size:18px">赎回</div>
<div class="t l" style="left:1448px;top:268px;font-size:18px">笔数</div><div class="t r w" style="right:160px;top:268px;font-size:18px">52</div><div class="t r w" style="right:11px;top:268px;font-size:18px">0</div>
<div class="t l" style="left:1448px;top:301px;font-size:18px">金额</div><div class="t r w" style="right:160px;top:301px;font-size:18px">0</div><div class="t r w" style="right:11px;top:301px;font-size:18px">0</div>
<div class="t l" style="left:1448px;top:334px;font-size:18px">份额</div><div class="t r w" style="right:160px;top:334px;font-size:18px">1.29亿</div><div class="t r w" style="right:11px;top:334px;font-size:18px">0</div>
<div class="hl" style="left:1437px;top:360px;width:446px"></div>
<div class="t" style="left:1444px;top:369px;font-size:18px;font-weight:bold;color:#f0f0f0">申赎清单</div><div class="t w" style="left:1845px;top:365px;font-size:16px">···</div>
<div class="t l" style="left:1448px;top:401px;font-size:18px">最小申赎单位份额</div><div class="t r w" style="right:11px;top:401px;font-size:18px">100万</div>
<div class="t l" style="left:1448px;top:434px;font-size:18px">现金替代比例上限</div><div class="t r w" style="right:11px;top:434px;font-size:18px">100%</div>
<div class="t l" style="left:1448px;top:467px;font-size:18px">申购赎回允许情况</div><div class="t r w" style="right:11px;top:467px;font-size:18px">申购赎回皆允许</div>
<div class="t l" style="left:1448px;top:499px;font-size:18px">T日预估现金差额</div><div class="t r w" style="right:11px;top:499px;font-size:18px">1.84元</div>
<div class="t l" style="left:1448px;top:532px;font-size:18px">T-1日单位申赎资产</div><div class="t r w" style="right:11px;top:532px;font-size:18px">1278270.82元</div>
<div class="hl" style="left:1437px;top:555px;width:446px"></div>
<div class="t" style="left:1443px;top:564px;font-size:18px;font-weight:bold;color:#e8e8e8">近5日净流入</div>
<div class="t r" style="right:11px;top:564px;font-size:18px;font-weight:bold;color:#e8e8e8">单位(万元)</div>
<div style="position:absolute;left:1463px;top:763px;width:44px;height:64px;background:#fa2a35"></div>
<div style="position:absolute;left:1551px;top:640px;width:44px;height:187px;background:#fa2a35"></div>
<div style="position:absolute;left:1639px;top:717px;width:44px;height:110px;background:#fa2a35"></div>
<div style="position:absolute;left:1727px;top:821px;width:44px;height:6px;background:#fa2a35"></div>
<div style="position:absolute;left:1815px;top:717px;width:44px;height:110px;background:#fa2a35"></div>
<div class="t" style="left:1455px;top:737px;width:60px;text-align:center;font-size:18px;color:#fa2a35">3852</div>
<div class="t" style="left:1543px;top:614px;width:60px;text-align:center;font-size:18px;color:#fa2a35">11153</div>
<div class="t" style="left:1631px;top:691px;width:60px;text-align:center;font-size:18px;color:#fa2a35">6576</div>
<div class="t" style="left:1719px;top:796px;width:60px;text-align:center;font-size:18px;color:#fa2a35">390</div>
<div class="t" style="left:1807px;top:691px;width:60px;text-align:center;font-size:18px;color:#fa2a35">6616</div>
<div class="t l" style="left:1455px;top:858px;width:60px;text-align:center;font-size:18px">3-27</div>
<div class="t l" style="left:1543px;top:858px;width:60px;text-align:center;font-size:18px">3-28</div>
<div class="t l" style="left:1631px;top:858px;width:60px;text-align:center;font-size:18px">3-31</div>
<div class="t l" style="left:1719px;top:858px;width:60px;text-align:center;font-size:18px">4-1</div>
<div class="t l" style="left:1807px;top:858px;width:60px;text-align:center;font-size:18px">4-2</div>
<div class="hl" style="left:1437px;top:885px;width:446px"></div>
</body></html>
